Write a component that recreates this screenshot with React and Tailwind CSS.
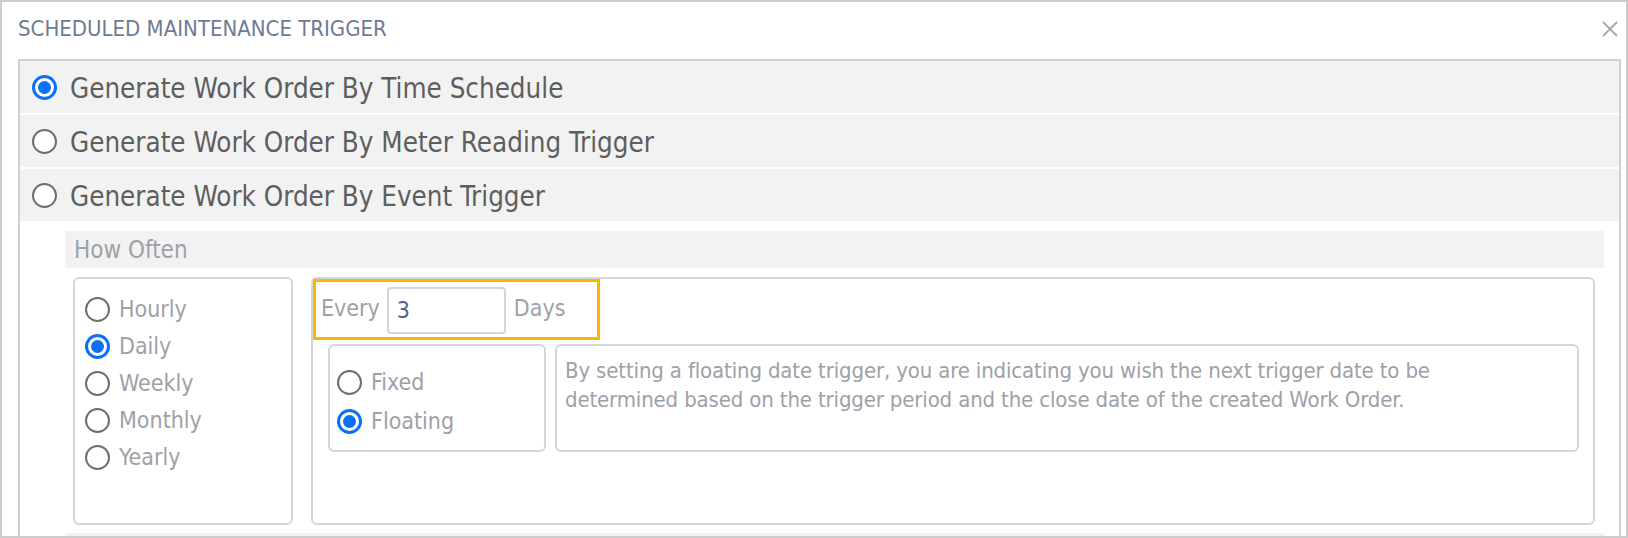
import React from 'react';

const Radio = ({ checked }) =>
  checked ? (
    <span className="w-[25px] h-[25px] rounded-full border-[3px] border-[#0b6ff7] bg-white flex items-center justify-center shrink-0">
      <span className="w-[13px] h-[13px] rounded-full bg-[#0b6ff7]" />
    </span>
  ) : (
    <span className="w-[25px] h-[25px] rounded-full border-2 border-[#6d6d6d] bg-white shrink-0" />
  );

const triggers = [
  { label: 'Generate Work Order By Time Schedule', checked: true },
  { label: 'Generate Work Order By Meter Reading Trigger', checked: false },
  { label: 'Generate Work Order By Event Trigger', checked: false },
];

const periods = [
  { label: 'Hourly', checked: false },
  { label: 'Daily', checked: true },
  { label: 'Weekly', checked: false },
  { label: 'Monthly', checked: false },
  { label: 'Yearly', checked: false },
];

export default function App() {
  return (
    <div className="w-[1628px] h-[538px] border-2 border-[#cccccc] bg-white overflow-hidden flex flex-col font-['DejaVu_Sans_Condensed','DejaVu_Sans',sans-serif] font-stretch-condensed">
      {/* header */}
      <div className="h-[57px] shrink-0 flex items-center justify-between pl-4 pr-[6px] pb-[3px]">
        <span className="text-[22px] leading-none text-[#6f7a95]">SCHEDULED MAINTENANCE TRIGGER</span>
        <svg width="16" height="16" viewBox="0 0 16 16" className="shrink-0 mr-[2px]">
          <path d="M1 1 L15 15 M15 1 L1 15" stroke="#a8a8a8" strokeWidth="1.8" />
        </svg>
      </div>

      {/* panel */}
      <div className="ml-4 mr-[5px] flex-1 border-2 border-b-0 border-[#cdd1d6] flex flex-col overflow-hidden">
        <div className="flex flex-col gap-[2px] bg-white">
          {triggers.map((t, i) => (
            <div key={i} className="h-[52px] bg-[#f2f2f2] flex items-center pl-3 gap-[13px]">
              <Radio checked={t.checked} />
              <span className="mt-[3px] text-[27.5px] leading-none text-[#5e5e5e]">{t.label}</span>
            </div>
          ))}
        </div>

        <div className="ml-[45px] mr-[15px] mt-[10px] flex flex-col text-[23px] text-[#9da1a8]">
          <div className="h-[37px] bg-[#f2f2f2] flex items-center pl-[9px] text-[24px]">How Often</div>

          <div className="mt-[9px] h-[248px] flex gap-[18px] pl-2 pr-[9px]">
            {/* period list */}
            <div className="w-[220px] border-2 border-[#d3d6da] rounded-[6px] pt-3 pl-[10px] flex flex-col">
              {periods.map((p, i) => (
                <label key={i} className="h-[37px] flex items-center gap-[9px]">
                  <Radio checked={p.checked} />
                  <span>{p.label}</span>
                </label>
              ))}
            </div>

            {/* settings */}
            <div className="flex-1 border-2 border-[#d3d6da] rounded-[6px] flex flex-col">
              <div className="w-[287px] h-[61px] border-[3px] border-[#f9b700] flex items-center pl-[5px] gap-[7px]">
                <span className="-mt-[3px]">Every</span>
                <div className="w-[119px] h-[47px] mt-[1px] border-2 border-[#d2d5d9] rounded-[4px] pl-2 flex items-center text-[#59628a]">
                  3
                </div>
                <span className="-mt-[3px] ml-[1px]">Days</span>
              </div>

              <div className="mt-[4px] flex gap-[9px] pl-[15px] pr-[14px]">
                <div className="w-[218px] h-[108px] border-2 border-[#d3d6da] rounded-[6px] pl-[7px] pt-[17px] flex flex-col">
                  <label className="h-[39px] flex items-center gap-[9px]">
                    <Radio checked={false} />
                    <span>Fixed</span>
                  </label>
                  <label className="h-[39px] flex items-center gap-[9px]">
                    <Radio checked={true} />
                    <span>Floating</span>
                  </label>
                </div>
                <div className="flex-1 h-[108px] border-2 border-[#d3d6da] rounded-[6px] px-2 pt-[10px] text-[22px] tracking-[-0.15px] leading-[29px]">
                  By setting a floating date trigger, you are indicating you wish the next trigger date to be
                  <br />
                  determined based on the trigger period and the close date of the created Work Order.
                </div>
              </div>
            </div>
          </div>

          <div className="mt-[8px] h-[20px] bg-[#f2f2f2]" />
        </div>
      </div>
    </div>
  );
}
